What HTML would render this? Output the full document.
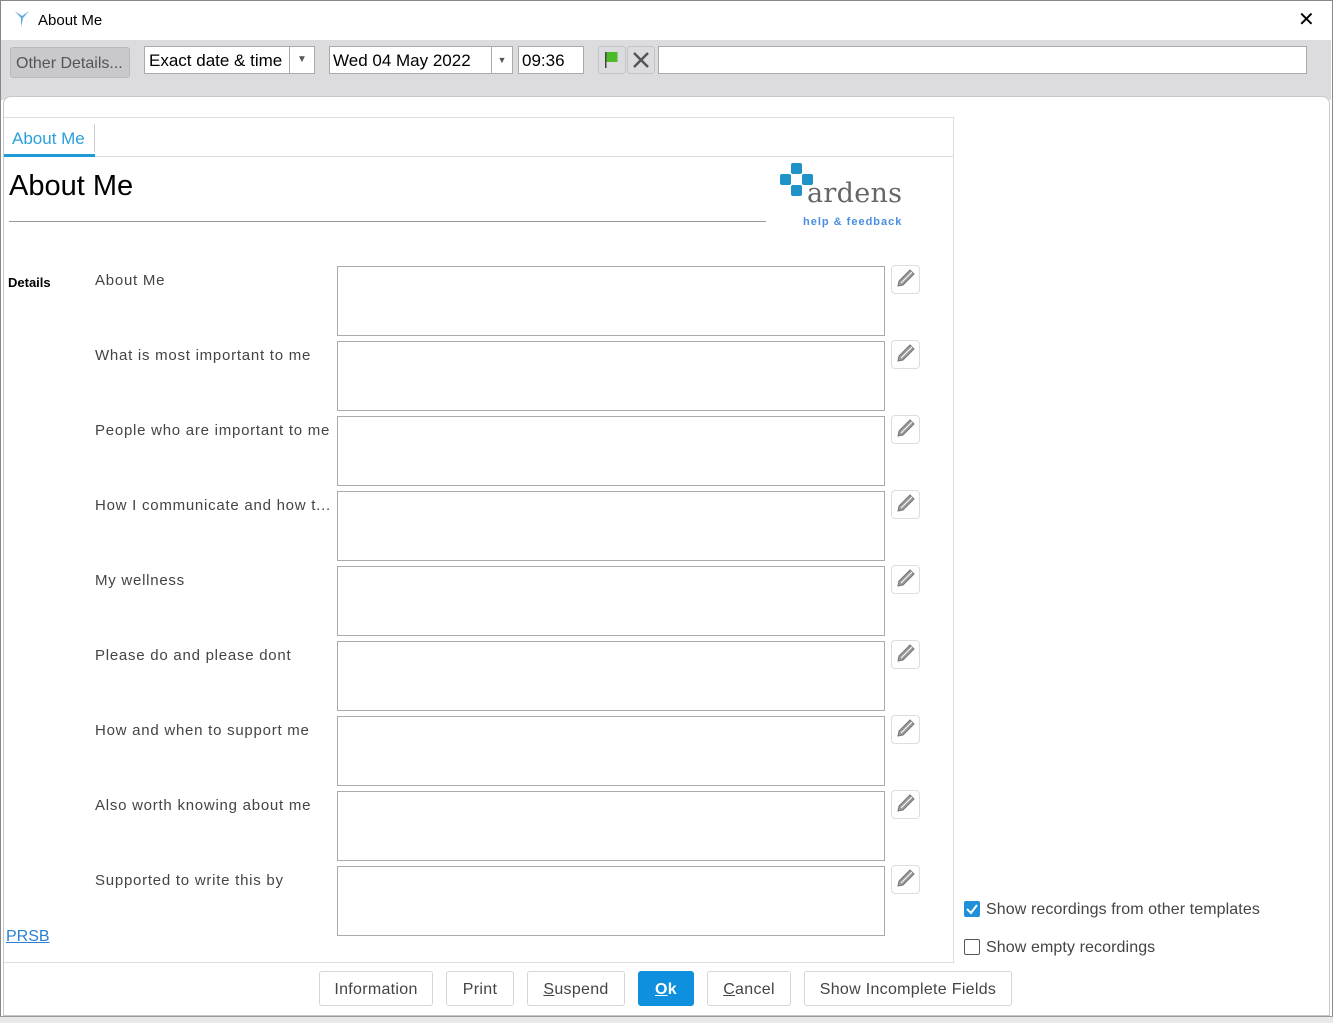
<!DOCTYPE html>
<html><head><style>
*{box-sizing:border-box;margin:0;padding:0}
body{width:1333px;height:1023px;background:#fff;font-family:"Liberation Sans",sans-serif;position:relative;overflow:hidden;color:#333}
.a{position:absolute}
.lbl{position:absolute;left:95px;font-size:15px;letter-spacing:0.75px;color:#444}
.ta{position:absolute;left:337px;width:548px;height:70px;border:1px solid #aaa;background:#fff}
.pen{position:absolute;left:891px;width:29px;height:29px;border:1px solid #ddd;border-radius:4px;background:#fff}
.btn{position:absolute;top:971px;height:35px;border:1px solid #d6d6d6;border-radius:3px;background:#fff;font-size:16px;color:#444;text-align:center;line-height:35px;letter-spacing:0.3px}
</style></head><body>
<div class="a" style="left:0;top:0;width:1333px;height:1023px;border:1px solid #888;border-bottom:none"></div>
<svg class="a" style="left:13px;top:9px" width="18" height="20"><path d="M2 2 L9 7 L16 2 L10 9 L8 18 L8 9 Z" fill="#5aa8e0"/></svg>
<div class="a" style="left:38px;top:12px;font-size:15px;color:#000">About Me</div>
<div class="a" style="left:1298px;top:7px;font-size:20px;color:#000">✕</div>
<div class="a" style="left:1px;top:40px;width:1330px;height:60px;background:#dcdcdf"></div>
<div class="a" style="left:10px;top:47px;width:120px;height:31px;background:#c9c9cc;border:1px solid #b9b9bc;border-radius:3px;font-size:16px;color:#555;line-height:31px;padding-left:5px">Other Details...</div>
<div class="a" style="left:144px;top:46px;width:171px;height:28px;background:#fff;border:1px solid #aaa;font-size:17px;line-height:28px;padding-left:4px;color:#000">Exact date &amp; time</div>
<div class="a" style="left:289px;top:47px;width:25px;height:26px;border-left:1px solid #aaa;font-size:10px;text-align:center;line-height:26px;color:#555">▼</div>
<div class="a" style="left:329px;top:46px;width:184px;height:28px;background:#fff;border:1px solid #aaa;font-size:17px;line-height:28px;padding-left:3px;color:#000">Wed 04 May 2022</div>
<div class="a" style="left:491px;top:47px;width:21px;height:26px;border-left:1px solid #aaa;font-size:9px;text-align:center;line-height:26px;color:#555">▼</div>
<div class="a" style="left:518px;top:46px;width:66px;height:28px;background:#fff;border:1px solid #aaa;font-size:17px;line-height:28px;padding-left:3px;color:#000">09:36</div>
<div class="a" style="left:598px;top:46px;width:28px;height:28px;border:1px solid #c4c4c7;border-radius:3px"></div>
<svg class="a" style="left:603px;top:50px" width="18" height="20"><rect x="2" y="2" width="1.5" height="16" fill="#444"/><rect x="3.5" y="2" width="11" height="10" fill="#4cbb2a"/></svg>
<div class="a" style="left:627px;top:46px;width:28px;height:28px;border:1px solid #c4c4c7;border-radius:3px"></div>
<svg class="a" style="left:632px;top:51px" width="18" height="18"><path d="M2 2L16 16M16 2L2 16" stroke="#555" stroke-width="2.5"/></svg>
<div class="a" style="left:658px;top:46px;width:649px;height:28px;background:#fff;border:1px solid #aaa"></div>
<div class="a" style="left:3px;top:96px;width:1327px;height:920px;background:#fff;border-radius:8px 8px 0 0;border:1px solid #c8c8c8"></div>
<div class="a" style="left:4px;top:117px;width:950px;height:846px;border:1px solid #ddd;border-left:none"></div>
<div class="a" style="left:4px;top:156px;width:950px;height:1px;background:#ddd"></div>
<div class="a" style="left:12px;top:129px;font-size:17px;color:#2aa0dc">About Me</div>
<div class="a" style="left:4px;top:154px;width:91px;height:3px;background:#1e9ad6"></div>
<div class="a" style="left:94px;top:124px;width:1px;height:28px;background:#ccc"></div>
<div class="a" style="left:9px;top:170px;font-size:29px;color:#000">About Me</div>
<div class="a" style="left:9px;top:221px;width:757px;height:1px;background:#999"></div>
<svg class="a" style="left:779px;top:162px" width="40" height="38"><g fill="#1f93c8"><rect x="12" y="1" width="11" height="11" rx="2"/><rect x="1" y="12" width="11" height="11" rx="2"/><rect x="23" y="12" width="11" height="11" rx="2"/><rect x="12" y="23" width="11" height="11" rx="2"/></g></svg>
<div class="a" style="left:807px;top:178px;font-family:'DejaVu Serif',serif;font-size:27px;color:#666;letter-spacing:0.3px">ardens</div>
<div class="a" style="left:803px;top:216px;font-size:11px;color:#4a8de0;letter-spacing:1px;font-weight:bold">help &amp; feedback</div>
<div class="a" style="left:8px;top:275px;font-size:13px;font-weight:bold;color:#000">Details</div>

<div class="lbl" style="top:272px">About Me</div>
<div class="lbl" style="top:347px">What is most important to me</div>
<div class="lbl" style="top:422px">People who are important to me</div>
<div class="lbl" style="top:497px">How I communicate and how t...</div>
<div class="lbl" style="top:572px">My wellness</div>
<div class="lbl" style="top:647px">Please do and please dont</div>
<div class="lbl" style="top:722px">How and when to support me</div>
<div class="lbl" style="top:797px">Also worth knowing about me</div>
<div class="lbl" style="top:872px">Supported to write this by</div>

<div class="ta" style="top:266px"></div><div class="ta" style="top:341px"></div><div class="ta" style="top:416px"></div><div class="ta" style="top:491px"></div><div class="ta" style="top:566px"></div><div class="ta" style="top:641px"></div><div class="ta" style="top:716px"></div><div class="ta" style="top:791px"></div><div class="ta" style="top:866px"></div>

<svg width="0" height="0" style="position:absolute"><defs><g id="p"><path d="M6 20 L7 15 L18 4 L22 8 L11 19 Z" fill="#999" stroke="#777" stroke-width="1"/><path d="M9 17 L20 6" stroke="#fff" stroke-width="1"/></g></defs></svg>
<div class="pen" style="top:265px"><svg width="27" height="27"><use href="#p"/></svg></div>
<div class="pen" style="top:340px"><svg width="27" height="27"><use href="#p"/></svg></div>
<div class="pen" style="top:415px"><svg width="27" height="27"><use href="#p"/></svg></div>
<div class="pen" style="top:490px"><svg width="27" height="27"><use href="#p"/></svg></div>
<div class="pen" style="top:565px"><svg width="27" height="27"><use href="#p"/></svg></div>
<div class="pen" style="top:640px"><svg width="27" height="27"><use href="#p"/></svg></div>
<div class="pen" style="top:715px"><svg width="27" height="27"><use href="#p"/></svg></div>
<div class="pen" style="top:790px"><svg width="27" height="27"><use href="#p"/></svg></div>
<div class="pen" style="top:865px"><svg width="27" height="27"><use href="#p"/></svg></div>

<div class="a" style="left:6px;top:928px;font-size:16px;color:#2a7fd4;text-decoration:underline">PRSB</div>
<div class="a" style="left:964px;top:901px;width:16px;height:16px;background:#1e8fd8;border-radius:2px"></div>
<svg class="a" style="left:964px;top:901px" width="16" height="16"><path d="M3 8 L7 12 L13 4" stroke="#fff" stroke-width="2" fill="none"/></svg>
<div class="a" style="left:986px;top:901px;font-size:16px;color:#444;letter-spacing:0.1px">Show recordings from other templates</div>
<div class="a" style="left:964px;top:939px;width:16px;height:16px;border:1px solid #555;border-radius:2px"></div>
<div class="a" style="left:986px;top:939px;font-size:16px;color:#444;letter-spacing:0.1px">Show empty recordings</div>

<div class="btn" style="left:319px;width:114px">Information</div>
<div class="btn" style="left:446px;width:68px">Print</div>
<div class="btn" style="left:527px;width:98px"><u>S</u>uspend</div>
<div class="btn" style="left:638px;width:56px;background:#0f90de;border-color:#0f90de;color:#fff;font-weight:bold"><u>O</u>k</div>
<div class="btn" style="left:707px;width:84px"><u>C</u>ancel</div>
<div class="btn" style="left:804px;width:208px">Show Incomplete Fields</div>
<div class="a" style="left:0;top:1016px;width:1333px;height:7px;background:#e8e8e8;border-top:1px solid #999"></div>
</body></html>
